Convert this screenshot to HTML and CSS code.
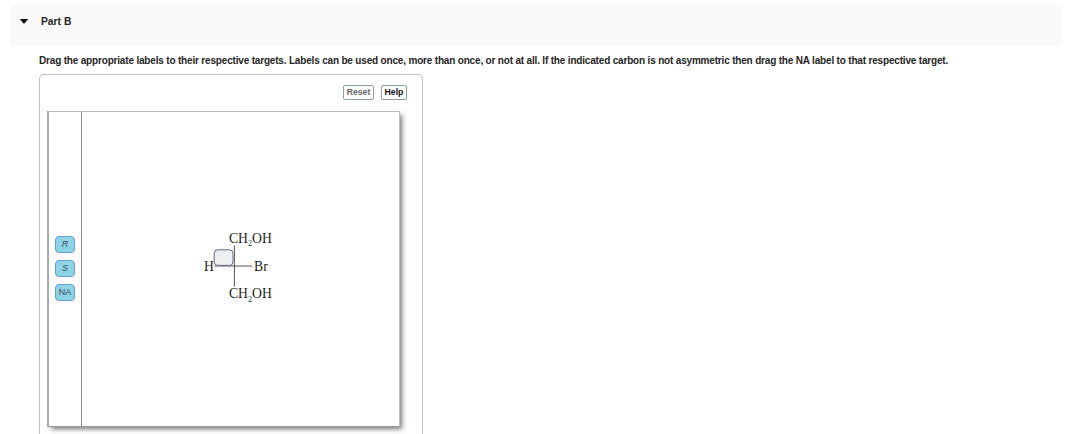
FILE: index.html
```html
<!DOCTYPE html>
<html lang="en">
<head>
    <meta charset="UTF-8">
    <meta name="viewport" content="width=device-width, initial-scale=1.0">
    <title>Part B</title>

    <link rel="stylesheet" href="styles.css">
</head>
<body>
    <div class="part-header">
        <svg class="arrow" width="8" height="5" viewBox="0 0 8 5"><path d="M0.6 0H7.4Q8 0 7.6 0.7L4.7 4.2Q4 5 3.3 4.2L0.4 0.7Q0 0 0.6 0Z"/></svg>
        <h2>Part B</h2>
    </div>
    <div class="content">
        <p class="instructions">Drag the appropriate labels to their respective targets. Labels can be used once, more than once, or not at all. If the indicated carbon is not asymmetric then drag the NA label to that respective target.</p>
        <div class="panel">
            <div class="toolbar">
                <button class="reset">Reset</button>
                <button class="help">Help</button>
            </div>
            <div class="board">
                <div class="labels">
                    <div class="label"><i>R</i></div>
                    <div class="label"><i>S</i></div>
                    <div class="label">NA</div>
                </div>
                <div class="canvas">
                    <svg class="molecule" width="80" height="80" viewBox="200 228 80 80">
                        <path class="bond" d="M234.4 245.5V286.5M214.5 266H252"/>
                        <rect class="target" x="214.2" y="249.8" width="18.8" height="15.6" rx="3.5"/>
                        <text x="229" y="242.5" textLength="19">CH</text>
                        <text class="sub" x="248" y="246">2</text>
                        <text x="252" y="242.5" textLength="20">OH</text>
                        <text x="204" y="270.5">H</text>
                        <text x="254" y="270.5">Br</text>
                        <text x="229" y="298" textLength="19">CH</text>
                        <text class="sub" x="248" y="301.5">2</text>
                        <text x="252" y="298" textLength="20">OH</text>
                    </svg>
                </div>
            </div>
        </div>
    </div>
</body>
</html>
```

FILE: styles.css
```css
* {
    box-sizing: border-box;
}

body {
    margin: 0;
    padding: 5px 14px 0 10px;
    height: 434px;
    overflow: hidden;
    background-color: #fff;
    color: #252525;
    font-family: "Liberation Sans", Arial, sans-serif;
}

.part-header {
    display: flex;
    align-items: center;
    height: 41px;
    padding: 0 0 8px 10px;
    background-color: #f9f9f9;
}

.arrow {
    margin-right: 13px;
    fill: #111;
}

h2 {
    margin: 0;
    font-size: 10.3px;
    line-height: 12px;
}

.content {
    padding-left: 29px;
}

.instructions {
    margin: 8px 0 7px;
    font-size: 10px;
    line-height: 13px;
    font-weight: bold;
    letter-spacing: -0.178px;
    white-space: nowrap;
}

.panel {
    width: 384px;
    height: 360px;
    padding: 10px 22px 0 7px;
    border: 1px solid #c4c4c4;
    border-bottom: none;
    border-radius: 5px 5px 0 0;
}

.toolbar {
    display: flex;
    justify-content: flex-end;
    gap: 7px;
    height: 26px;
    margin-right: -7px;
}

button {
    height: 15px;
    padding: 0;
    background-color: #fff;
    border: 1px solid #90a0a2;
    border-radius: 2px;
    font-family: "Liberation Sans", Arial, sans-serif;
    font-size: 8.7px;
    line-height: 11px;
    font-weight: bold;
}

.reset {
    width: 31px;
    color: #666;
}

.help {
    width: 26px;
    color: #111;
}

.board {
    display: flex;
    width: 353px;
    height: 316px;
    border: 1px solid #bbb;
    border-left: 2px solid #aaa;
    border-bottom-color: #999;
    box-shadow: 3px 3px 5px -1px #777;
}

.labels {
    display: flex;
    flex-direction: column;
    gap: 7px;
    width: 33px;
    padding: 123.5px 0 0 6px;
    border-right: 1px solid #888;
}

.label {
    width: 20px;
    height: 17px;
    background-color: #8ed4e8;
    border: 1px solid #6b9bd0;
    border-radius: 4px;
    color: #3c4c52;
    font-size: 9px;
    line-height: 15px;
    text-align: center;
}

.canvas {
    padding: 116px 0 0 118px;
}

.molecule {
    display: block;
    font-family: "Liberation Serif", "Times New Roman", serif;
    font-size: 13.7px;
    fill: #222;
}

.sub {
    font-size: 8px;
}

.bond {
    fill: none;
    stroke: #555;
}

.target {
    fill: #edf0f1;
    stroke: #65677a;
}
```
